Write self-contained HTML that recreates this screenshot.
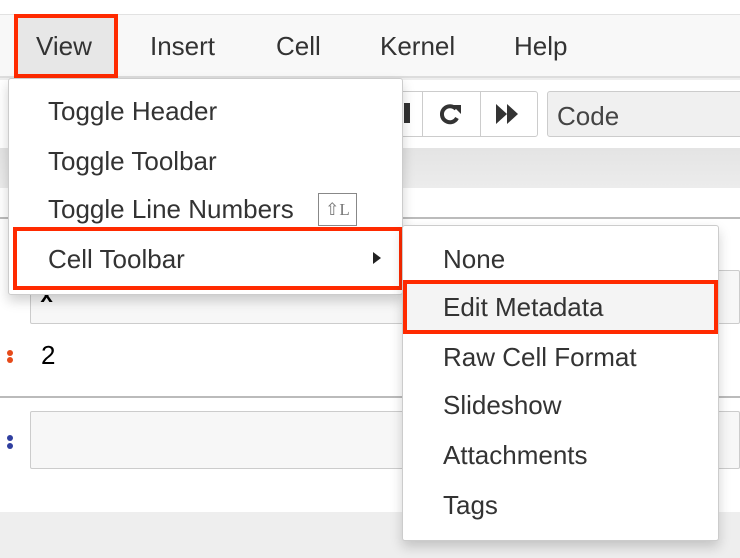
<!DOCTYPE html>
<html><head><meta charset="utf-8"><style>
*{margin:0;padding:0;box-sizing:border-box}
body{width:740px;height:558px;overflow:hidden;background:#eee;font-family:"Liberation Sans",Helvetica,Arial,sans-serif;position:relative;color:#333}
.abs{position:absolute}
.t{position:absolute;font-size:26px;line-height:30px;white-space:nowrap}
.dot{position:absolute;width:6px;height:6px;border-radius:50%}
</style></head><body>
<div class="abs" style="left:0;top:0;width:740px;height:14px;background:#fff"></div>
<div class="abs" style="left:0;top:14px;width:740px;height:64px;background:#f8f8f8;border-top:1px solid #e2e2e2;border-bottom:2px solid #ddd"></div>
<div class="abs" style="left:14px;top:14px;width:104px;height:64px;background:#e7e7e7;border:4px solid #ff2a00"></div>
<div class="t" style="left:36px;top:31px">View</div>
<div class="t" style="left:150px;top:31px">Insert</div>
<div class="t" style="left:276px;top:31px">Cell</div>
<div class="t" style="left:380px;top:31px">Kernel</div>
<div class="t" style="left:514px;top:31px">Help</div>
<!-- toolbar -->
<div class="abs" style="left:0;top:80px;width:740px;height:68px;background:#fff"></div>
<div class="abs" style="left:370px;top:91px;width:168px;height:46px;background:#fff;border:1px solid #ccc;border-radius:3px"></div>
<div class="abs" style="left:422px;top:91px;width:1px;height:46px;background:#ccc"></div>
<div class="abs" style="left:480px;top:91px;width:1px;height:46px;background:#ccc"></div>
<div class="abs" style="left:404px;top:103px;width:6px;height:20px;background:#333"></div>
<svg class="abs" style="left:439px;top:102px" width="26" height="24" viewBox="0 0 26 24"><path d="M17 7 A8 8 0 1 0 18 16" fill="none" stroke="#333" stroke-width="4"/><path d="M13 3 L22 3 L22 12 Z" fill="#333"/></svg>
<svg class="abs" style="left:496px;top:104px" width="26" height="20"><path d="M0 0 L11 10 L0 20Z M11 0 L22 10 L11 20Z" fill="#333"/></svg>
<div class="abs" style="left:547px;top:91px;width:200px;height:46px;background:#f0f0f0;border:1px solid #ccc;border-radius:3px"></div>
<div class="t" style="left:557px;top:101px;color:#444">Code</div>
<div class="abs" style="left:735px;top:110px;border:5px solid transparent;border-right:6px solid #555"></div>
<div class="abs" style="left:0;top:148px;width:740px;height:40px;background:linear-gradient(#e4e4e4,#ececec)"></div>
<div class="abs" style="left:0;top:188px;width:740px;height:324px;background:#fff"></div>
<div class="abs" style="left:0;top:217px;width:740px;height:2px;background:#bbb"></div>
<div class="abs" style="left:30px;top:270px;width:710px;height:54px;background:#f7f7f7;border:1px solid #ccc;border-radius:2px"></div>
<div class="t" style="left:40px;top:282px;font-family:'Liberation Mono',monospace;font-weight:bold;font-size:22px;color:#000">x</div>
<div class="dot" style="left:7px;top:350px;background:#e64a19"></div>
<div class="dot" style="left:7px;top:357px;background:#e64a19"></div>
<div class="t" style="left:41px;top:340px;color:#000">2</div>
<div class="abs" style="left:0;top:396px;width:740px;height:2px;background:#bbb"></div>
<div class="abs" style="left:30px;top:411px;width:710px;height:58px;background:#f7f7f7;border:1px solid #ccc;border-radius:2px"></div>
<div class="dot" style="left:7px;top:435px;background:#303f9f"></div>
<div class="dot" style="left:7px;top:443px;background:#303f9f"></div>
<!-- view menu -->
<div class="abs" style="left:8px;top:78px;width:395px;height:217px;background:#fff;border:1px solid #ccc;border-radius:3px;box-shadow:0 6px 12px rgba(0,0,0,.18)"></div>
<div class="t" style="left:48px;top:96px">Toggle Header</div>
<div class="t" style="left:48px;top:146px">Toggle Toolbar</div>
<div class="t" style="left:48px;top:194px">Toggle Line Numbers</div>
<div class="abs" style="left:318px;top:193px;width:39px;height:33px;border:1px solid #888;font-size:17px;line-height:31px;text-align:center;color:#777;font-family:'Liberation Serif',serif">⇧L</div>
<div class="abs" style="left:13px;top:227px;width:390px;height:63px;border:4px solid #ff2a00;background:#fff"></div>
<div class="t" style="left:48px;top:244px">Cell Toolbar</div>
<div class="abs" style="left:373px;top:252px;border:6px solid transparent;border-left:8px solid #222;border-right:0"></div>
<!-- submenu -->
<div class="abs" style="left:402px;top:225px;width:317px;height:316px;background:#fff;border:1px solid #ccc;border-radius:3px;box-shadow:0 6px 12px rgba(0,0,0,.18)"></div>
<div class="abs" style="left:403px;top:280px;width:315px;height:54px;border:4px solid #ff2a00;background:#f4f4f4"></div>
<div class="t" style="left:443px;top:244px">None</div>
<div class="t" style="left:443px;top:292px">Edit Metadata</div>
<div class="t" style="left:443px;top:342px">Raw Cell Format</div>
<div class="t" style="left:443px;top:390px">Slideshow</div>
<div class="t" style="left:443px;top:440px">Attachments</div>
<div class="t" style="left:443px;top:490px">Tags</div>
</body></html>
